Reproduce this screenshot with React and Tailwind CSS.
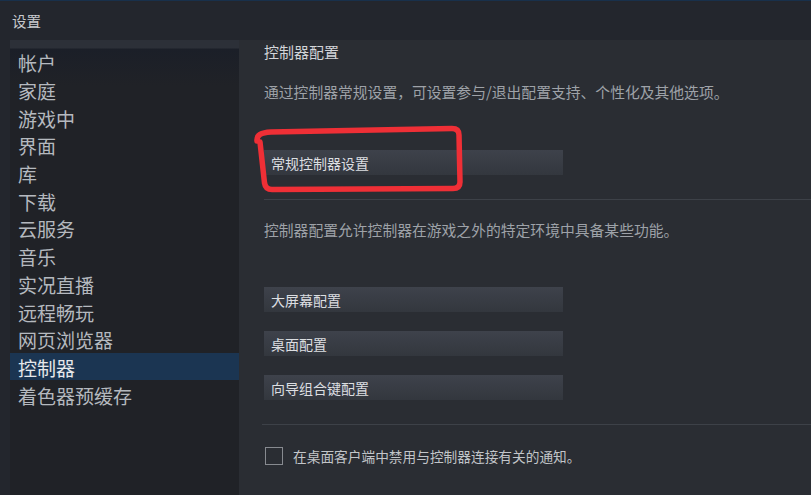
import React from "react";

const FONT = "font-['Noto_Sans_CJK_SC','Noto_Sans',sans-serif]";

const navItems = [
  "帐户",
  "家庭",
  "游戏中",
  "界面",
  "库",
  "下载",
  "云服务",
  "音乐",
  "实况直播",
  "远程畅玩",
  "网页浏览器",
  "控制器",
  "着色器预缓存",
];

function ConfigButton({ children, className = "" }) {
  return (
    <button
      type="button"
      className={`flex h-[25px] w-[299px] items-center bg-gradient-to-b from-[#3e424b] to-[#33373e] px-[7px] text-left text-[14px] leading-none text-[#dcdee1] ${className}`}
    >
      {children}
    </button>
  );
}

function Sidebar() {
  return (
    <nav className="flex w-[229px] flex-col bg-[#202227] bg-[linear-gradient(to_bottom,#2c3038_0px,#2c3038_8px,#1b1f28_9px,#202227_45px)] pt-[8px]">
      {navItems.map((label) => {
        const active = label === "控制器";
        return (
          <div
            key={label}
            className={`flex h-[27.7px] items-center pl-[8px] pt-[2px] text-[19px] leading-none ${
              active ? "bg-[#1b3552] text-[#e6e8eb]" : "text-[#b5b9bf]"
            }`}
          >
            {label}
          </div>
        );
      })}
    </nav>
  );
}

function MarkerOutline() {
  return (
    <svg
      className="pointer-events-none absolute left-0 top-0"
      width="811"
      height="495"
      viewBox="0 0 811 495"
      fill="none"
    >
      <path
        d="M257,141 C256.5,135 261,132.5 271,132 L452,128.5 Q459,128.5 459,135 L460,182 Q460,188.5 453,188.5 L272,189.5 Q265.5,189.5 264.5,183 L260,142"
        stroke="#ef2f36"
        strokeWidth="5.5"
        strokeLinecap="round"
        strokeLinejoin="round"
      />
    </svg>
  );
}

export default function App() {
  return (
    <div
      className={`relative flex h-[495px] w-[811px] flex-col overflow-hidden bg-[#23262d] ${FONT}`}
    >
      <header className="flex h-[40px] items-center border-t border-[#18304b] pl-[12px] text-[14.5px] text-[#c8cace]">
        设置
      </header>

      <div className="flex flex-1 pl-[10px]">
        <Sidebar />

        <main className="flex flex-1 flex-col bg-[#2a2d33] pl-[25px]">
          <h2 className="mt-[2px] h-[20px] text-[15px] leading-[20px] text-[#d2d4d8]">
            控制器配置
          </h2>
          <p className="mt-[20px] h-[20px] text-[14.8px] leading-[20px] text-[#9ea2a8]">
            通过控制器常规设置，可设置参与/退出配置支持、个性化及其他选项。
          </p>

          <ConfigButton className="mt-[48px]">常规控制器设置</ConfigButton>

          <div className="mt-[24px] h-px bg-[#3d4148]" />

          <p className="mt-[20px] h-[20px] text-[14.8px] leading-[20px] text-[#9ea2a8]">
            控制器配置允许控制器在游戏之外的特定环境中具备某些功能。
          </p>

          <ConfigButton className="mt-[47px]">大屏幕配置</ConfigButton>
          <ConfigButton className="mt-[19px]">桌面配置</ConfigButton>
          <ConfigButton className="mt-[19px]">向导组合键配置</ConfigButton>

          <div className="-ml-[2px] mt-[24px] h-px bg-[#3d4148]" />

          <label className="mt-[22px] flex items-center">
            <span className="ml-[1px] h-[18px] w-[18px] border-[1.5px] border-[#878a90]" />
            <span className="ml-[10px] text-[13.7px] leading-[18px] text-[#c2c5c9]">
              在桌面客户端中禁用与控制器连接有关的通知。
            </span>
          </label>
        </main>
      </div>

      <MarkerOutline />
    </div>
  );
}
